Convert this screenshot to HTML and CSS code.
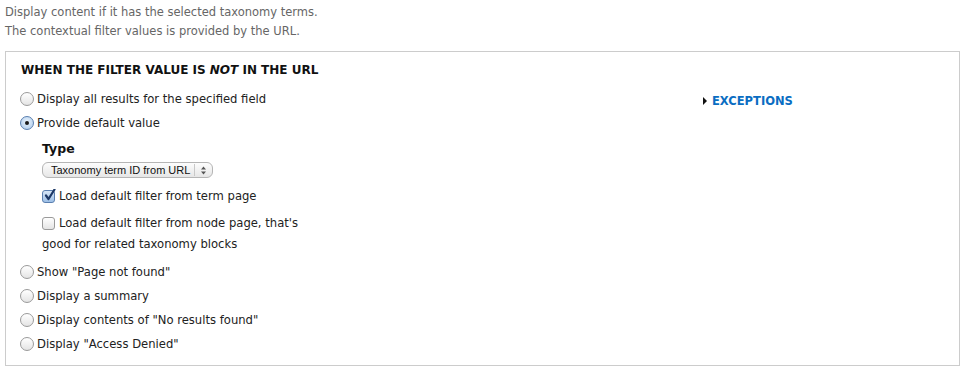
FILE: index.html
```html
<!DOCTYPE html>
<html>
<head>
<meta charset="utf-8">
<link rel="stylesheet" href="styles.css">
</head>
<body>
<div class="desc">
  <div>Display content if it has the selected taxonomy terms.</div>
  <div>The contextual filter values is provided by the URL.</div>
</div>
<fieldset class="box">
  <div class="main">
    <h3 class="heading">When the filter value is <em>not</em> in the URL</h3>
    <div class="row"><span class="radio"></span><span>Display all results for the specified field</span></div>
    <div class="row"><span class="radio on"></span><span>Provide default value</span></div>
    <div class="sub">
      <div class="label">Type</div>
      <div class="select"><span class="sel-text">Taxonomy term ID from URL</span><span class="sel-arrows"><svg width="7" height="9" viewBox="0 0 7 9"><path d="M3.5 0.5 L6 3.5 L1 3.5 Z M3.5 8.5 L6 5.5 L1 5.5 Z" fill="#555"/></svg></span></div>
      <div class="row check-row"><span class="check on"><svg width="13" height="13" viewBox="0 0 13 13"><path d="M3 6.5 L5.5 10 L11.5 0.5" fill="none" stroke="#1c3866" stroke-width="2.2" stroke-linecap="round" stroke-linejoin="round"/></svg></span><span>Load default filter from term page</span></div>
      <div class="row check-row multi"><span class="check"></span><span>Load default filter from node page, that's</span></div>
      <div class="cont">good for related taxonomy blocks</div>
    </div>
    <div class="row"><span class="radio"></span><span>Show "Page not found"</span></div>
    <div class="row"><span class="radio"></span><span>Display a summary</span></div>
    <div class="row"><span class="radio"></span><span>Display contents of "No results found"</span></div>
    <div class="row"><span class="radio"></span><span>Display "Access Denied"</span></div>
  </div>
  <div class="side">
    <a class="exceptions" href="#"><span class="tri"></span>Exceptions</a>
  </div>
</fieldset>
</body>
</html>
```
FILE: styles.css
```css
html, body {
  margin: 0;
  padding: 0;
  background: #fff;
}
body {
  font-family: "DejaVu Sans", Verdana, sans-serif;
  font-size: 11.6px;
  color: #222;
  padding: 3px 5px 0 5px;
}
.desc {
  color: #666;
  font-size: 11.5px;
  line-height: 19px;
}
.box {
  box-sizing: border-box;
  margin: 10px 0 0 0;
  width: 955px;
  height: 315px;
  border: 1px solid #ccc;
  padding: 10px 15px 0 15px;
  display: grid;
  grid-template-columns: 682px 1fr;
}
.heading {
  margin: 0 0 9px 0;
  font-size: 12px;
  font-weight: bold;
  text-transform: uppercase;
  color: #111;
  line-height: 16px;
}
.heading em {
  font-style: italic;
}
.row {
  display: flex;
  align-items: center;
  height: 24px;
  margin-left: -1px;
}
.radio {
  box-sizing: border-box;
  width: 14px;
  height: 14px;
  border-radius: 50%;
  border: 1px solid #9a9a9a;
  background: linear-gradient(#ffffff, #e4e4e4);
  margin-right: 3px;
  flex: none;
  position: relative;
}
.radio.on {
  border-color: #5a7fb0;
  background: radial-gradient(circle at 50% 40%, #e9f3fc, #a9c8ea);
}
.radio.on::after {
  content: "";
  position: absolute;
  left: 4px;
  top: 4px;
  width: 4px;
  height: 4px;
  border-radius: 50%;
  background: #1a1a1a;
}
.sub {
  padding-left: 21px;
  padding-top: 6px;
}
.label {
  font-weight: bold;
  font-size: 12.5px;
  line-height: 16px;
  color: #111;
}
.select {
  box-sizing: border-box;
  display: flex;
  align-items: center;
  width: 171px;
  height: 16px;
  margin-top: 5px;
  border: 1px solid #b5b5b5;
  border-radius: 6px;
  background: linear-gradient(#fdfdfd, #e6e6e6);
  font-family: "Liberation Sans", Arial, sans-serif;
  font-size: 11px;
  color: #111;
  white-space: nowrap;
}
.sel-text {
  flex: 1;
  padding-left: 8px;
}
.sel-arrows {
  width: 17px;
  height: 12px;
  border-left: 1px solid #c8c8c8;
  display: flex;
  align-items: center;
  justify-content: center;
}
.check-row {
  margin-left: 0;
  margin-top: 6px;
}
.check-row.multi {
  margin-top: 3px;
}
.check {
  box-sizing: border-box;
  width: 13px;
  height: 13px;
  border: 1px solid #9a9a9a;
  border-radius: 3px;
  background: linear-gradient(#ffffff, #e4e4e4);
  margin-right: 4px;
  flex: none;
  position: relative;
}
.check.on {
  border-color: #5a7fb0;
  background: linear-gradient(#d6e6f7, #9dbfe6);
}
.check svg {
  position: absolute;
  left: 0;
  top: -2px;
}
.cont {
  line-height: 16px;
  margin-top: 1px;
  margin-bottom: 8px;
}
.side {
  padding-top: 32px;
}
.exceptions {
  display: flex;
  align-items: center;
  color: #0a6dc2;
  font-weight: bold;
  text-transform: uppercase;
  text-decoration: none;
  font-size: 11.5px;
}
.tri {
  width: 0;
  height: 0;
  border-top: 4px solid transparent;
  border-bottom: 4px solid transparent;
  border-left: 4px solid #111;
  margin-right: 5px;
}
```
